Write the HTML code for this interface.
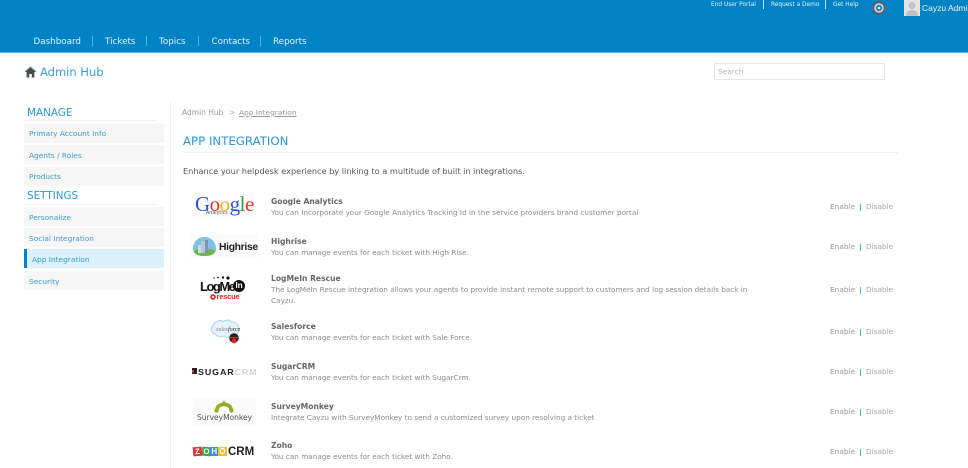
<!DOCTYPE html>
<html>
<head>
<meta charset="utf-8">
<style>
html,body{margin:0;padding:0;background:#fff;}
#p{position:relative;width:968px;height:468px;overflow:hidden;background:#fff;font-family:"DejaVu Sans","Liberation Sans",sans-serif;filter:blur(.3px);}
#p div{position:absolute;white-space:nowrap;}
.t{line-height:14px;transform-origin:left center;}
.nav{color:#e4f3fb;font-size:8.75px;top:34.500px;}
.sep{background:#5aaed9;width:1px;height:10px;top:36px;}
.top{color:#e6f3fa;font-size:5.85px;top:-2.500px;}
.tsep{background:#bfe0f2;width:1px;height:9px;top:0;}
.item{left:24px;width:140px;height:19px;background:#f6f6f6;}
.il{left:29px;color:#3d9bd0;font-size:7.4px;}
.sh{left:27px;color:#2f96d0;font-size:10.4px;}
.ttl{left:271px;color:#666;font-size:7.6px;font-weight:bold;}
.dsc{left:271px;color:#8d8d8d;font-size:7.27px;}
.en{left:830px;color:#9a9a9a;font-size:7.4px;}
.bar{left:860px;width:1px;height:7px;background:#4fb3e2;}
.dis{left:866px;color:#a8a8a8;font-size:7.3px;}
.sans{font-family:'Liberation Sans',sans-serif;font-weight:bold;}
.zl{color:#fff;font-family:'Liberation Sans',sans-serif;font-weight:bold;font-size:8px;line-height:9px;text-align:center;}
</style>
</head>
<body>
<div id="p">
<div style="left:0;top:0;width:968px;height:52px;background:#0082c5;"></div>
<div style="left:0;top:52px;width:968px;height:1px;background:#5fb0dc;"></div>

<div class="t top" style="left:711px;">End User Portal</div>
<div class="tsep" style="left:763px;"></div>
<div class="t top" style="left:771px;">Request a Demo</div>
<div class="tsep" style="left:825px;"></div>
<div class="t top" style="left:833px;">Get Help</div>
<svg style="position:absolute;left:871px;top:0" width="16" height="16" viewBox="0 0 16 16">
<circle cx="8" cy="8" r="6.600" fill="#59636c" stroke="#59636c" stroke-width="1.400" stroke-dasharray="2 1.200"/>
<circle cx="8" cy="8" r="4.800" fill="#b9d4ea"/>
<circle cx="8" cy="8" r="3" fill="#1a74b8"/>
<circle cx="8" cy="8" r="1.300" fill="#e8f2fa"/>
</svg>
<svg style="position:absolute;left:904px;top:0" width="16" height="16" viewBox="0 0 16 16">
<rect width="16" height="16" fill="#e4e4e4"/>
<circle cx="8" cy="5.500" r="3.600" fill="#c2c2c2"/>
<path d="M2 16c0-4.500 2.500-6 6-6s6 1.500 6 6z" fill="#c2c2c2"/>
</svg>
<div class="t" style="left:922px;top:1px;color:#eaf5fb;font-family:'Liberation Sans',sans-serif;font-size:8.500px;">Cayzu Admin</div>

<div class="t nav" style="left:33.500px;">Dashboard</div>
<div class="sep" style="left:92px;"></div>
<div class="t nav" style="left:105px;">Tickets</div>
<div class="sep" style="left:146px;"></div>
<div class="t nav" style="left:159px;">Topics</div>
<div class="sep" style="left:198px;"></div>
<div class="t nav" style="left:211.500px;">Contacts</div>
<div class="sep" style="left:260px;"></div>
<div class="t nav" style="left:273px;">Reports</div>

<svg style="position:absolute;left:24px;top:66px" width="13" height="12" viewBox="0 0 13 12">
<path d="M6.500 1L1 6h1.600v5.500h2.600V8h2.600v3.500h2.600V6H12z" fill="#4a4a4a"/>
<path d="M1 5.500L6.500.8 12 5.500" fill="none" stroke="#6db5de" stroke-width="1"/>
</svg>
<div class="t" style="left:40px;top:65px;color:#3b9ed4;font-size:11.500px;">Admin Hub</div>

<div style="left:714px;top:63px;width:169px;height:15px;border:1px solid #e6e6e6;"></div>
<div class="t" style="left:718px;top:64.500px;color:#b5b5b5;font-size:7.400px;">Search</div>

<div style="left:170px;top:102px;width:1px;height:366px;background:#efefef;"></div>

<div class="t sh" style="top:105.500px;">MANAGE</div>
<div style="left:24px;top:120px;width:132px;height:1px;background:#f2f2f2;"></div>
<div class="item" style="top:124px;"></div>
<div class="t il" style="top:127px;">Primary Account Info</div>
<div class="item" style="top:145px;"></div>
<div class="t il" style="top:148.500px;">Agents / Roles</div>
<div class="item" style="top:167px;"></div>
<div class="t il" style="top:170px;">Products</div>

<div class="t sh" style="top:188.500px;">SETTINGS</div>
<div style="left:24px;top:204px;width:132px;height:1px;background:#f0f0f0;"></div>
<div class="item" style="top:207px;"></div>
<div class="t il" style="top:210.500px;">Personalize</div>
<div class="item" style="top:228px;"></div>
<div class="t il" style="top:231.500px;">Social Integration</div>
<div class="item" style="top:249px;background:#dbf0fd;"></div>
<div style="left:24px;top:249px;width:3px;height:19px;background:#0082c5;"></div>
<div class="t il" style="left:32px;top:253px;">App Integration</div>
<div class="item" style="top:271px;"></div>
<div class="t il" style="top:274.500px;">Security</div>

<div class="t" style="left:182px;top:105.500px;color:#999;font-size:7.500px;">Admin Hub</div>
<div class="t" style="left:229px;top:105.500px;color:#aaa;font-size:7.500px;">&gt;</div>
<div class="t" style="left:239px;top:105.500px;color:#999;font-size:7.400px;text-decoration:underline;">App Integration</div>

<div class="t" style="left:183px;top:134px;color:#2f96d0;font-size:11.750px;">APP INTEGRATION</div>
<div style="left:183px;top:152px;width:715px;height:1px;background:#efefef;"></div>
<div class="t" style="left:183px;top:164px;color:#555;font-size:8.180px;">Enhance your helpdesk experience by linking to a multitude of built in integrations.</div>

<!-- Google -->
<div style="left:192px;top:193px;width:62px;height:26px;background:#fcfcfe;"></div>
<div class="t" style="left:195px;top:197px;font-family:'Liberation Serif',serif;font-size:21px;letter-spacing:-.5px;"><span style="color:#2a55d8">G</span><span style="color:#d8392b">o</span><span style="color:#efb320">o</span><span style="color:#2a55d8">g</span><span style="color:#2f9e44">l</span><span style="color:#d8392b">e</span></div>
<div class="t" style="left:206px;top:207px;color:#555;font-size:4.800px;">Analytics</div>

<!-- Highrise -->
<div style="left:190px;top:234px;width:68px;height:24px;background:#fcfbfd;"></div>
<svg style="position:absolute;left:192px;top:236px" width="25" height="21" viewBox="0 0 25 21">
<path d="M1 13C1 6 6 1 12.500 1S24 6 24 13c0 4-3 7-11.500 7S1 17 1 13z" fill="#7cc0e4"/>
<path d="M2 15c3-3 18-3 21 0-1 4-6 5-10.500 5S3 19 2 15z" fill="#74b347"/>
<rect x="9" y="5" width="4" height="12" fill="#b5c9d6"/><rect x="13" y="4" width="3" height="13" fill="#7d98ad"/><rect x="6" y="9" width="3" height="8" fill="#cfdce4"/>
</svg>
<div class="t sans" style="left:219px;top:240.500px;color:#222;font-size:10.300px;letter-spacing:-.3px;">Highrise</div>

<!-- LogMeIn -->
<div class="t sans" style="left:200px;top:279.500px;color:#111;font-size:13px;letter-spacing:-1.500px;">LogMe</div>
<svg style="position:absolute;left:199px;top:276px" width="50" height="24" viewBox="0 0 50 24">
<circle cx="40" cy="10" r="6" fill="#111"/>
<circle cx="15" cy="2" r=".7" fill="#111"/><circle cx="19" cy="1.500" r=".9" fill="#111"/><circle cx="24" cy="1.500" r="1.200" fill="#111"/><circle cx="29" cy="2" r="1.600" fill="#111"/>
<circle cx="14" cy="21" r="2.800" fill="#d8262c"/><circle cx="14" cy="21" r="1.100" fill="#fff"/>
</svg>
<div class="t sans" style="left:235.500px;top:279px;color:#fff;font-size:8px;">In</div>
<div class="t sans" style="left:216.500px;top:290px;color:#d8262c;font-size:7.500px;letter-spacing:-.2px;">rescue</div>

<!-- Salesforce -->
<svg style="position:absolute;left:209px;top:319px" width="32" height="26" viewBox="0 0 32 26">
<path d="M8 2.500c2-1.500 4-1.500 6 0 3-2 7-2 8.500.5 4-.5 7 2 7 5.500 2 3-1 8-5 7.500-2 2.500-7 3-9 1-3 2-8 1-9-2C2 15 1 9 4 7c0-2 2-4 4-4.500z" fill="#e6f2fb" stroke="#a5cde9" stroke-width=".8"/>
<circle cx="25" cy="19" r="4.800" fill="#222"/>
<circle cx="25" cy="22" r="2.400" fill="#d8262c"/>
<rect x="20.500" y="18" width="9" height="1.400" fill="#d8262c"/>
</svg>
<div class="t" style="left:216px;top:323px;color:#888;font-family:'Liberation Serif',serif;font-style:italic;font-size:6px;">sales<span style="color:#333">force</span></div>

<!-- SugarCRM -->
<div style="left:192px;top:368px;width:5px;height:6px;background:#222;"></div>
<div style="left:192px;top:370px;width:2px;height:3px;background:#c0392b;"></div>
<div class="t sans" style="left:198px;top:365px;color:#222;font-size:8.500px;letter-spacing:.9px;transform:scaleX(1.040);">SUGAR<span style="color:#d5d5d5;">CRM</span></div>

<!-- SurveyMonkey -->
<div style="left:193px;top:398px;width:63px;height:28px;background:#fcfbfb;"></div>
<svg style="position:absolute;left:214px;top:400px" width="20" height="13" viewBox="0 0 20 13">
<path d="M3 9.500C3.500 6 6 4.500 10 4.500s6.500 1.500 7 5" fill="none" stroke="#8fb025" stroke-width="3.600"/>
<path d="M10 .5l3 3.500H7z" fill="#8fb025"/>
<circle cx="2.500" cy="10.500" r="2.200" fill="#8fb025"/><circle cx="17.500" cy="10.500" r="2.200" fill="#8fb025"/>
</svg>
<div class="t" style="left:197px;top:411px;color:#555;font-size:7.500px;">SurveyMonkey</div>

<!-- Zoho -->
<div class="zl" style="left:193px;top:447px;width:9px;height:9px;background:#d8363a;transform:rotate(-5deg);">Z</div>
<div class="zl" style="left:201.500px;top:446.500px;width:9px;height:9px;background:#4aa04a;transform:rotate(5deg);">O</div>
<div class="zl" style="left:210px;top:447px;width:8.500px;height:9px;background:#3f8fd8;">H</div>
<div class="zl" style="left:218px;top:447px;width:9px;height:9px;background:#f2c230;">O</div>
<div class="t sans" style="left:228px;top:444.500px;color:#222;font-size:11.500px;">CRM</div>

<!-- rows -->
<div class="t ttl" style="top:195px;">Google Analytics</div>
<div class="t dsc" style="top:206px;">You can Incorporate your Google Analytics Tracking Id in the service providers brand customer portal</div>
<div class="t ttl" style="top:235px;">Highrise</div>
<div class="t dsc" style="top:246px;">You can manage events for each ticket with High Rise.</div>
<div class="t ttl" style="top:272px;">LogMeIn Rescue</div>
<div class="t dsc" style="top:283px;">The LogMeIn Rescue integration allows your agents to provide instant remote support to customers and log session details back in</div>
<div class="t dsc" style="top:294px;">Cayzu.</div>
<div class="t ttl" style="top:320px;">Salesforce</div>
<div class="t dsc" style="top:331px;">You can manage events for each ticket with Sale Force.</div>
<div class="t ttl" style="top:360px;">SugarCRM</div>
<div class="t dsc" style="top:371px;">You can manage events for each ticket with SugarCrm.</div>
<div class="t ttl" style="top:400px;">SurveyMonkey</div>
<div class="t dsc" style="top:411px;">Integrate Cayzu with SurveyMonkey to send a customized survey upon resolving a ticket</div>
<div class="t ttl" style="top:439px;">Zoho</div>
<div class="t dsc" style="top:450px;">You can manage events for each ticket with Zoho.</div>

<div class="t en" style="top:200px;">Enable</div><div class="bar" style="top:204px;"></div><div class="t dis" style="top:200px;">Disable</div>
<div class="t en" style="top:240px;">Enable</div><div class="bar" style="top:244px;"></div><div class="t dis" style="top:240px;">Disable</div>
<div class="t en" style="top:283px;">Enable</div><div class="bar" style="top:287px;"></div><div class="t dis" style="top:283px;">Disable</div>
<div class="t en" style="top:325px;">Enable</div><div class="bar" style="top:329px;"></div><div class="t dis" style="top:325px;">Disable</div>
<div class="t en" style="top:365px;">Enable</div><div class="bar" style="top:369px;"></div><div class="t dis" style="top:365px;">Disable</div>
<div class="t en" style="top:405px;">Enable</div><div class="bar" style="top:409px;"></div><div class="t dis" style="top:405px;">Disable</div>
<div class="t en" style="top:445px;">Enable</div><div class="bar" style="top:449px;"></div><div class="t dis" style="top:445px;">Disable</div>
</div>
</body>
</html>
